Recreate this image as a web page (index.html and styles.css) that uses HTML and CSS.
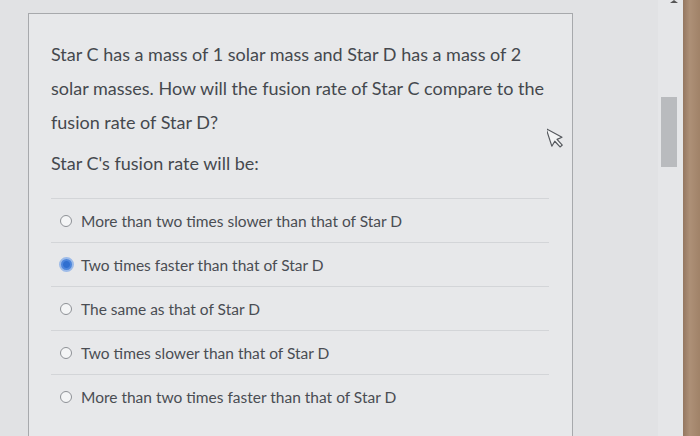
FILE: index.html
```html
<!DOCTYPE html>
<html>
<head>
<meta charset="utf-8">
<link rel="stylesheet" href="styles.css">
</head>
<body>
<div class="main">
  <div class="card">
    <div class="question">
      <p class="q">Star C has a mass of 1 solar mass and Star D has a mass of 2 solar masses. How will the fusion rate of Star C compare to the fusion rate of Star D?</p>
      <p class="q q2">Star C's fusion rate will be:</p>
    </div>
    <div class="answers">
      <div class="row"><span class="radio"></span><span class="label">More than two times slower than that of Star D</span></div>
      <div class="row"><span class="radio checked"></span><span class="label">Two times faster than that of Star D</span></div>
      <div class="row"><span class="radio"></span><span class="label">The same as that of Star D</span></div>
      <div class="row"><span class="radio"></span><span class="label">Two times slower than that of Star D</span></div>
      <div class="row"><span class="radio"></span><span class="label">More than two times faster than that of Star D</span></div>
    </div>
  </div>
</div>
<div class="track"><div class="arrow"></div><div class="thumb"></div></div>
<div class="wood"></div>
<svg class="cursor" width="18" height="26" viewBox="0 0 16 24">
  <path d="M2 1 L2 18 L6 14.5 L9 21 L11.5 20 L8.5 13.5 L13.5 13 Z" fill="#f2f3f4" stroke="#55585d" stroke-width="1.1" stroke-linejoin="round" transform="rotate(-18 8 12)"/>
</svg>
</body>
</html>
```

FILE: styles.css
```css
html, body {
  margin: 0;
  padding: 0;
}
body {
  width: 700px;
  height: 436px;
  overflow: hidden;
  display: flex;
  background: #e1e2e4;
  font-family: Lato, "Noto Sans", sans-serif;
  color: #45484e;
  position: relative;
}
.main {
  width: 658px;
  padding: 13px 0 0 28px;
  box-sizing: border-box;
  display: flex;
}
.card {
  width: 545px;
  box-sizing: border-box;
  border: 1px solid #a7a9ac;
  border-bottom: none;
  background: #e7e8ea;
  padding: 23px 0 0 22px;
}
.question {
  width: 500px;
}
.q {
  margin: 0;
  font-size: 18px;
  line-height: 34px;
}
.q2 {
  margin-top: 7px;
}
.answers {
  margin-top: 18px;
  width: 498px;
}
.row {
  height: 44px;
  border-top: 1px solid #d3d5d8;
  display: flex;
  align-items: center;
  padding-left: 9px;
  box-sizing: border-box;
}
.radio {
  width: 12px;
  height: 12px;
  border-radius: 50%;
  border: 1px solid #8e9196;
  background: #f4f5f6;
  box-sizing: border-box;
  margin-right: 9px;
  flex: none;
}
.radio.checked {
  width: 15px;
  height: 15px;
  border: 2px solid #9dbbe8;
  background: radial-gradient(circle, #2f6fd0 0 3px, #4d86dc 4px);
  margin-left: -1px;
  margin-right: 7px;
}
.label {
  font-size: 15.5px;
  color: #4a4d53;
}
.track {
  width: 25px;
  background: #e5e6e8;
  position: relative;
}
.thumb {
  margin: 97px 0 0 3px;
  width: 16px;
  height: 70px;
  background: #b9bbbe;
}
.arrow {
  position: absolute;
  left: 12px;
  top: 0;
  width: 0;
  height: 0;
  border-left: 4px solid transparent;
  border-right: 4px solid transparent;
  border-bottom: 3px solid #555;
}
.wood {
  width: 17px;
  background: linear-gradient(90deg, #947761 0%, #ad9077 40%, #a08268 100%);
}
.cursor {
  position: absolute;
  left: 547px;
  top: 125px;
}
```
